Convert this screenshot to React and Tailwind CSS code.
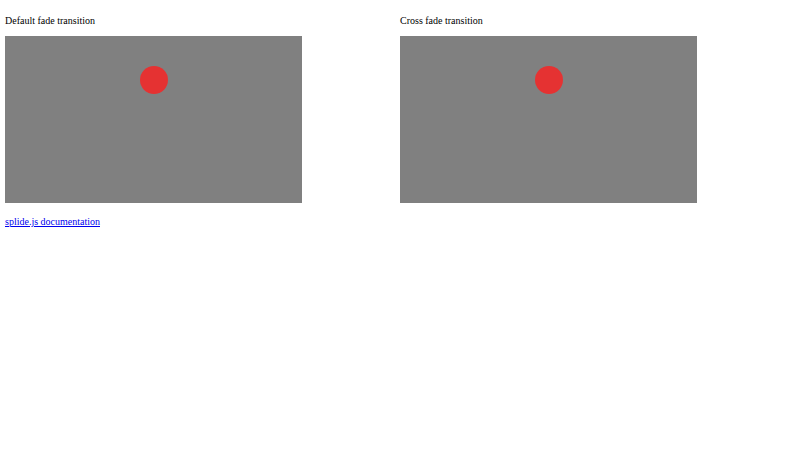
export default function App() {
  const demos = ['Default fade transition', 'Cross fade transition'];

  return (
    <div className="min-h-[450px] bg-white px-[5px] pt-[14px] font-['Liberation_Serif',serif] text-[10px] leading-[13px] text-black">
      <div className="flex">
        {demos.map((title) => (
          <div key={title} className="w-[395px]">
            <p>{title}</p>
            <div className="mt-[9px] flex h-[167px] w-[297px] justify-center bg-[#808080] pt-[30px]">
              <div className="h-[28px] w-[28px] rounded-full bg-[#e53232]" />
            </div>
          </div>
        ))}
      </div>
      <a href="#" className="mt-[12px] inline-block text-[#0000ee] underline">
        splide.js documentation
      </a>
    </div>
  );
}
